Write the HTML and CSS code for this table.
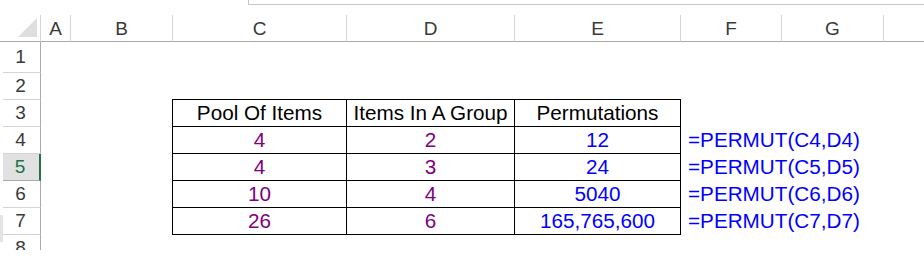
FILE: index.html
```html
<!DOCTYPE html>
<html>
<head>
<meta charset="utf-8">
<link rel="stylesheet" href="styles.css">
</head>
<body>
<div class="topbar"><div class="fxbox"></div></div>
<div class="sheet">
  <div class="hdr corner"><svg class="tri" width="41" height="26" viewBox="0 0 41 26"><polygon points="37,3 37,22 18,22" fill="#dedede"/></svg></div>
  <div class="hdr">A</div>
  <div class="hdr">B</div>
  <div class="hdr">C</div>
  <div class="hdr">D</div>
  <div class="hdr">E</div>
  <div class="hdr">F</div>
  <div class="hdr">G</div>
  <div class="hdr hdr-rest"></div>

  <div class="rowheads">
    <div class="rh rh-tall">1</div>
    <div class="rh">2</div>
    <div class="rh">3</div>
    <div class="rh">4</div>
    <div class="rh rh-sel">5</div>
    <div class="rh">6</div>
    <div class="rh">7</div>
    <div class="rh">8</div>
  </div>

  <div class="datatable">
    <div class="tc">Pool Of Items</div>
    <div class="tc">Items In A Group</div>
    <div class="tc">Permutations</div>

    <div class="tc purple">4</div>
    <div class="tc purple">2</div>
    <div class="tc blue">12</div>

    <div class="tc purple">4</div>
    <div class="tc purple">3</div>
    <div class="tc blue">24</div>

    <div class="tc purple">10</div>
    <div class="tc purple">4</div>
    <div class="tc blue">5040</div>

    <div class="tc purple">26</div>
    <div class="tc purple">6</div>
    <div class="tc blue">165,765,600</div>
  </div>

  <div class="formulas">
    <div class="fm">=PERMUT(C4,D4)</div>
    <div class="fm">=PERMUT(C5,D5)</div>
    <div class="fm">=PERMUT(C6,D6)</div>
    <div class="fm">=PERMUT(C7,D7)</div>
  </div>
</div>
</body>
</html>
```

FILE: styles.css
```css
* { box-sizing: border-box; }

html, body {
  margin: 0;
  padding: 0;
  background: #ffffff;
}

body {
  width: 924px;
  height: 263px;
  overflow: hidden;
  font-family: "Liberation Sans", Arial, sans-serif;
}

.topbar {
  height: 15px;
}

.fxbox {
  margin-left: 248px;
  height: 5px;
  border-left: 1px solid #c6c6c6;
  border-bottom: 1px solid #c6c6c6;
}

.sheet {
  display: grid;
  grid-template-columns: 41px 30px 102px 174px 168px 166px 101px 102px 1fr;
  grid-template-rows: 27px 31px repeat(7, 27px);
  height: 235px;
  overflow: hidden;
}

.hdr {
  display: flex;
  align-items: center;
  justify-content: center;
  border-right: 1px solid #d6d6d6;
  border-bottom: 1px solid #ababab;
  font-size: 19px;
  color: #3a3a3a;
  line-height: 1;
}

.hdr-rest {
  border-right: none;
}

.corner {
  display: block;
  position: relative;
}

.tri {
  display: block;
}

.rowheads {
  grid-area: 2 / 1 / -1 / 2;
  display: flex;
  flex-direction: column;
  background: linear-gradient(#e4e4e4, #e4e4e4) no-repeat 0 173px / 3px 27px;
}

.rh {
  flex: 0 0 27px;
  height: 27px;
  margin-left: 3px;
  display: flex;
  align-items: center;
  justify-content: center;
  border-right: 1px solid #ababab;
  border-bottom: 1px solid #d4d4d4;
  font-size: 19px;
  color: #3a3a3a;
  padding-right: 2px;
}

.rh-tall {
  flex-basis: 31px;
  height: 31px;
}

.rh-sel {
  background: #e1e1e1;
  color: #217346;
  border-right: 2px solid #217346;
  border-bottom-color: #ababab;
}

.datatable {
  grid-area: 4 / 4 / 9 / 7;
  margin: -1px 0 0 -1px;
  display: grid;
  grid-template-columns: 174px 168px 166px;
  grid-template-rows: repeat(5, 27px);
  border-left: 1px solid #000;
  border-top: 1px solid #000;
}

.tc {
  display: flex;
  align-items: center;
  justify-content: center;
  border-right: 1px solid #000;
  border-bottom: 1px solid #000;
  font-size: 20.7px;
  color: #000;
  white-space: nowrap;
}

.purple { color: #800080; }
.blue { color: #0000ff; }

.formulas {
  grid-area: 5 / 7 / 9 / 8;
  display: flex;
  flex-direction: column;
}

.fm {
  flex: 0 0 27px;
  display: flex;
  align-items: center;
  padding: 0 0 1px 7px;
  font-size: 20.7px;
  color: #0000ff;
  white-space: nowrap;
  overflow: visible;
}
```
